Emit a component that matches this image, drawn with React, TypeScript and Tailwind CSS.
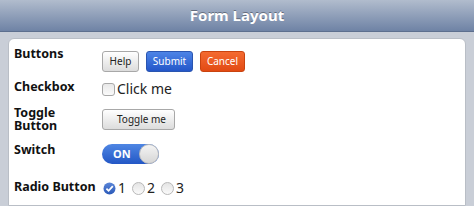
import { useState } from "react";

const font = { fontFamily: '"Noto Sans", "Open Sans", sans-serif' };

function Row({ label, children, className = "" }: { label: React.ReactNode; children: React.ReactNode; className?: string }) {
  return (
    <div className={`flex items-start ${className}`}>
      <div className="w-[88px] shrink-0 whitespace-nowrap text-[12.5px] font-bold leading-[14px] text-[#111]">{label}</div>
      <div className="flex items-center">{children}</div>
    </div>
  );
}

function Radio({ checked, label }: { checked?: boolean; label: string }) {
  return (
    <label className="mr-[6px] flex items-center text-[14px] text-[#222]">
      {checked ? (
        <svg width="13" height="13" viewBox="0 0 13 13">
          <defs>
            <linearGradient id="rb" x1="0" y1="0" x2="0" y2="1">
              <stop offset="0" stopColor="#5b86d8" />
              <stop offset="1" stopColor="#2a59b8" />
            </linearGradient>
          </defs>
          <circle cx="6.5" cy="6.5" r="6" fill="url(#rb)" />
          <path d="M3.4 6.6 L5.6 8.8 L9.8 4.2" stroke="#fff" strokeWidth="1.8" fill="none" />
        </svg>
      ) : (
        <span className="block h-[13px] w-[13px] rounded-full border border-[#b8b8b8] bg-gradient-to-b from-[#e4e4e4] to-[#fafafa]" />
      )}
      <span className="ml-[2px] leading-none">{label}</span>
    </label>
  );
}

export default function App() {
  const [on, setOn] = useState(true);
  return (
    <div className="flex h-[206px] w-[474px] flex-col overflow-hidden bg-[#c9ced7]" style={font}>
      <header className="flex h-[32px] shrink-0 items-center justify-center border-b border-[#5d6f8e] bg-gradient-to-b from-[#b1bccd] to-[#6f83a5]">
        <h1 className="text-[15px] font-bold text-white [text-shadow:0_-1px_0_rgba(0,0,0,0.35)]">Form Layout</h1>
      </header>
      <main className="mx-[8px] mt-[6px] flex-1 rounded-t-[6px] border border-[#b9bec6] bg-white pl-[5px] pt-[8px]">
        <Row label="Buttons">
          <div className="mt-[4px] flex gap-[7px]">
            <button className="h-[21px] w-[37px] rounded-[3px] border border-[#a8a8a8] bg-gradient-to-b from-white to-[#dcdcdc] text-[10px] text-[#222]">Help</button>
            <button className="h-[21px] w-[47px] rounded-[3px] border border-[#2a55b0] bg-gradient-to-b from-[#4d84e6] to-[#2456c9] text-[10px] text-white">Submit</button>
            <button className="h-[21px] w-[45px] rounded-[3px] border border-[#c9430f] bg-gradient-to-b from-[#f46a30] to-[#e24a12] text-[10px] text-white">Cancel</button>
          </div>
        </Row>
        <Row label="Checkbox" className="mt-[8px]">
          <label className="mt-[2px] flex items-center text-[14px] text-[#222]">
            <span className="block h-[13px] w-[13px] rounded-[3px] border border-[#a8a8a8] bg-gradient-to-b from-[#e8e8e8] to-[#fafafa]" />
            <span className="ml-[2px] leading-none">Click me</span>
          </label>
        </Row>
        <Row
          label={
            <span className="block leading-[13px]">
              Toggle
              <br />
              Button
            </span>
          }
          className="mt-[10px]"
        >
          <button className="mt-[3px] h-[21px] w-[73px] rounded-[3px] border border-[#a8a8a8] bg-gradient-to-b from-white to-[#dcdcdc] pl-[6px] text-[10px] text-[#222]">
            Toggle me
          </button>
        </Row>
        <Row label="Switch" className="mt-[11px]">
          <button
            onClick={() => setOn(!on)}
            className="relative mt-[1px] h-[20px] w-[57px] rounded-full bg-gradient-to-b from-[#4f86e3] to-[#2357c5]"
          >
            <span className="absolute left-[11px] top-[3px] text-[11px] font-bold leading-[14px] text-white">ON</span>
            <span className="absolute right-0 top-0 h-[20px] w-[20px] rounded-full border border-[#bcbcbc] bg-gradient-to-b from-[#f4f4f4] to-[#d6d6d6]" />
          </button>
        </Row>
        <Row label="Radio Button" className="mt-[16px]">
          <div className="mt-[1px] flex pl-[1px]">
            <Radio checked label="1" />
            <Radio label="2" />
            <Radio label="3" />
          </div>
        </Row>
      </main>
    </div>
  );
}
